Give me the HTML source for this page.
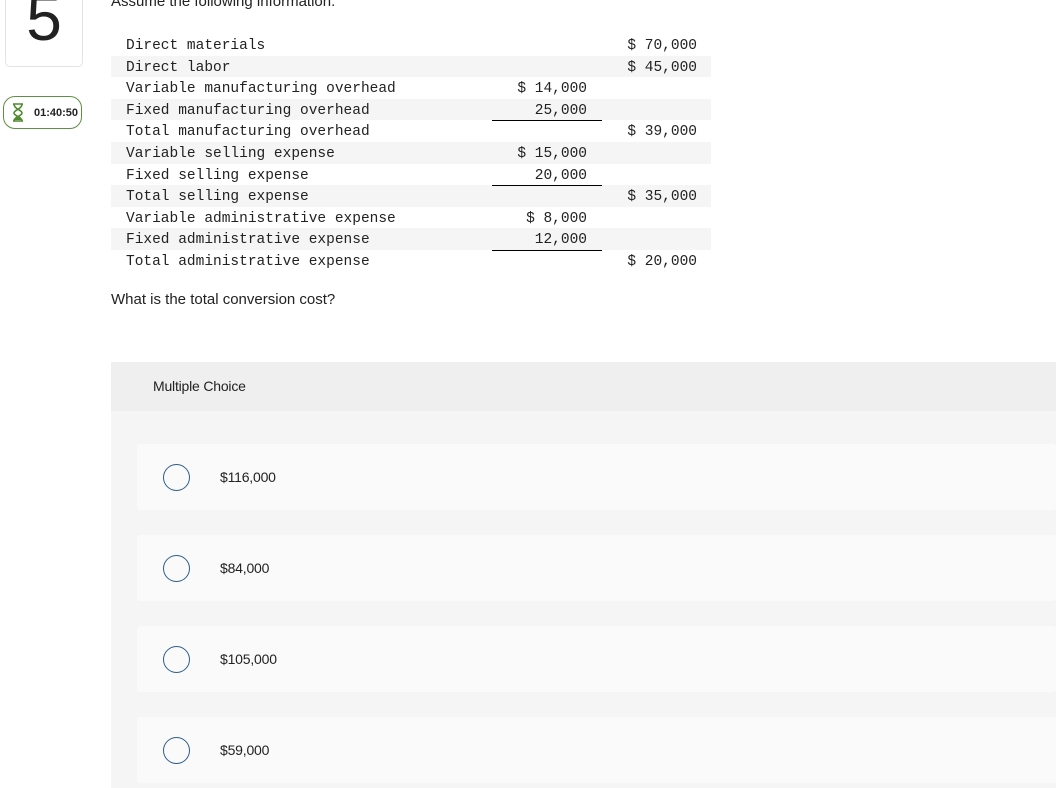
<!DOCTYPE html>
<html><head><style>
body{margin:0;width:1056px;height:788px;background:#fff;position:relative;overflow:hidden;font-family:"Liberation Sans",sans-serif;color:#222}
.num{position:absolute;left:5px;top:-10px;width:76px;height:75px;border:1px solid #e3e3e3;border-radius:5px;overflow:hidden}
.num span{position:absolute;left:0;width:76px;top:-6px;font-size:64px;text-align:center;line-height:66px;color:#222}
.timer{position:absolute;left:3px;top:96px;width:77px;height:31px;border:1px solid #5f8f45;border-radius:12px;font-size:11px;font-weight:bold}
.timer span{position:absolute;left:30px;top:10px}
.intro{position:absolute;left:111px;top:-7px;font-size:15px}
.row{position:absolute;left:111px;width:600px;height:21.6px;font-family:"Liberation Mono",monospace;font-size:14.5px;line-height:21.6px}
.row.s{background:#f5f5f5}
.row span{top:2px}
.row .l{position:absolute;left:15px}
.row .a{position:absolute;right:124px}
.row .b{position:absolute;right:14px}
.ul{position:absolute;left:492px;width:110px;height:1px;background:#000;z-index:2}
.q{position:absolute;left:111px;top:291px;font-size:15px}
.mc{position:absolute;left:111px;top:362px;width:945px;height:426px;background:#f5f5f5}
.mch{height:49px;background:#efefef;font-size:14px;line-height:49px;padding-left:42px;letter-spacing:-0.2px}
.opt{position:absolute;left:26px;width:919px;height:66px;background:#fafafa;border-radius:3px}
.opt i{position:absolute;left:26px;top:20px;width:27px;height:27px;border:1.5px solid #2d5d8b;border-radius:50%;box-sizing:border-box}
.opt span{position:absolute;left:83px;top:25px;font-size:14px;letter-spacing:-0.2px}
</style></head><body>
<div class="num"><span>5</span></div>
<div class="timer"><svg style="position:absolute;left:8px;top:6px" width="12" height="19" viewBox="0 0 12 19"><path d="M1 1h10M1 18h10M2 1c0 5 8 6 8 9s-8 4-8 8M10 1c0 5-8 6-8 9s8 4 8 8" fill="none" stroke="#4f8a2e" stroke-width="1.6"/><path d="M3 17c1-3 5-3 6 0z" fill="#4f8a2e"/></svg><span>01:40:50</span></div>
<div class="intro">Assume the following information.</div>

<div class="row" style="top:34px"><span class="l">Direct materials</span><span class="b">$ 70,000</span></div>
<div class="row s" style="top:55.6px"><span class="l">Direct labor</span><span class="b">$ 45,000</span></div>
<div class="row" style="top:77.2px"><span class="l">Variable manufacturing overhead</span><span class="a">$ 14,000</span></div>
<div class="row s" style="top:98.8px"><span class="l">Fixed manufacturing overhead</span><span class="a">25,000</span></div>
<div class="ul" style="top:120px"></div>
<div class="row" style="top:120.4px"><span class="l">Total manufacturing overhead</span><span class="b">$ 39,000</span></div>
<div class="row s" style="top:142px"><span class="l">Variable selling expense</span><span class="a">$ 15,000</span></div>
<div class="row" style="top:163.6px"><span class="l">Fixed selling expense</span><span class="a">20,000</span></div>
<div class="ul" style="top:184.5px"></div>
<div class="row s" style="top:185.2px"><span class="l">Total selling expense</span><span class="b">$ 35,000</span></div>
<div class="row" style="top:206.8px"><span class="l">Variable administrative expense</span><span class="a">$ 8,000</span></div>
<div class="row s" style="top:228.4px"><span class="l">Fixed administrative expense</span><span class="a">12,000</span></div>
<div class="ul" style="top:249.5px"></div>
<div class="row" style="top:250px"><span class="l">Total administrative expense</span><span class="b">$ 20,000</span></div>

<div class="q">What is the total conversion cost?</div>
<div class="mc">
<div class="mch">Multiple Choice</div>
<div class="opt" style="top:82px"><i></i><span>$116,000</span></div>
<div class="opt" style="top:173px"><i></i><span>$84,000</span></div>
<div class="opt" style="top:264px"><i></i><span>$105,000</span></div>
<div class="opt" style="top:355px"><i></i><span>$59,000</span></div>
</div>
</body></html>
